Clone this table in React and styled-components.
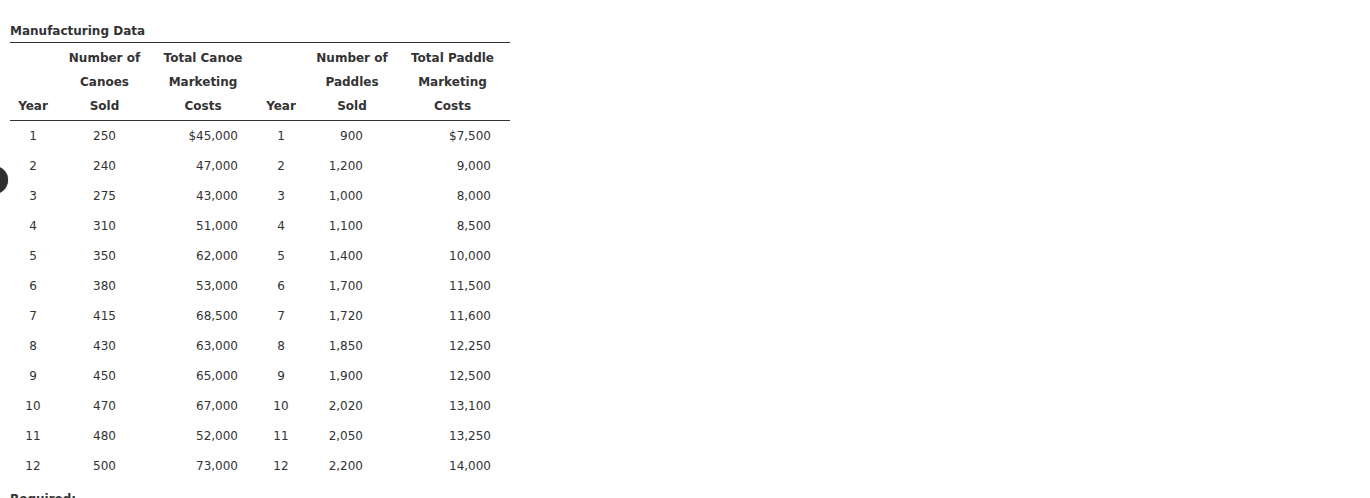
import React from "react";
import styled, { createGlobalStyle } from "styled-components";

const GlobalStyle = createGlobalStyle`
  html, body {
    margin: 0;
    padding: 0;
    background: #ffffff;
  }
  body {
    font-family: "DejaVu Sans", Verdana, sans-serif;
    color: #333333;
    overflow: hidden;
  }
`;

// ---------- Layout ----------
const Page = styled.div`
  position: relative;
  width: 1370px;
  height: 498px;
  overflow: hidden;
`;

const Section = styled.div`
  width: 500px;
  padding: 20px 0 0 10px;
`;

const Title = styled.div`
  font-size: 12px;
  font-weight: 700;
  line-height: 22px;
  height: 22px;
`;

// partially visible round button hanging off the left edge
const EdgeKnob = styled.div`
  position: absolute;
  left: -20px;
  top: 166px;
  width: 28px;
  height: 28px;
  border-radius: 50%;
  background: #2f2f2f;
  box-shadow: 0 0 1px #777;
`;

// ---------- Table ----------
const Table = styled.table`
  width: 500px;
  border-collapse: collapse;
  table-layout: fixed;
  font-size: 12px;
  color: #333333;
`;

const Head = styled.thead`
  border-top: 1px solid #333333;
  border-bottom: 1px solid #333333;
`;

const HeadCell = styled.th`
  font-weight: 700;
  text-align: center;
  vertical-align: bottom;
  line-height: 24px;
  padding: 3px 0 2px;
`;

const Cell = styled.td`
  height: 30px;
  box-sizing: border-box;
  padding: 1px ${({ pr }) => pr || 0}px 0 0;
  text-align: ${({ align }) => align || "center"};
  line-height: 29px;
  white-space: nowrap;
`;

const Required = styled.div`
  margin-top: 8px;
  font-size: 12px;
  font-weight: 700;
  line-height: 20px;
`;

const columns = [
  { width: 46, title: ["Year"], align: "center" },
  { width: 97, title: ["Number of", "Canoes", "Sold"], align: "right", pr: 37 },
  { width: 100, title: ["Total Canoe", "Marketing", "Costs"], align: "right", pr: 15 },
  { width: 56, title: ["Year"], align: "center" },
  { width: 86, title: ["Number of", "Paddles", "Sold"], align: "right", pr: 32 },
  { width: 115, title: ["Total Paddle", "Marketing", "Costs"], align: "right", pr: 19 },
];

const rows = [
  ["1", "250", "$45,000", "1", "900", "$7,500"],
  ["2", "240", "47,000", "2", "1,200", "9,000"],
  ["3", "275", "43,000", "3", "1,000", "8,000"],
  ["4", "310", "51,000", "4", "1,100", "8,500"],
  ["5", "350", "62,000", "5", "1,400", "10,000"],
  ["6", "380", "53,000", "6", "1,700", "11,500"],
  ["7", "415", "68,500", "7", "1,720", "11,600"],
  ["8", "430", "63,000", "8", "1,850", "12,250"],
  ["9", "450", "65,000", "9", "1,900", "12,500"],
  ["10", "470", "67,000", "10", "2,020", "13,100"],
  ["11", "480", "52,000", "11", "2,050", "13,250"],
  ["12", "500", "73,000", "12", "2,200", "14,000"],
];

const App = () => {
  return (
    <Page>
      <GlobalStyle />
      <EdgeKnob />
      <Section>
        <Title>Manufacturing Data</Title>
        <Table>
          <colgroup>
            {columns.map((c, i) => (
              <col key={i} style={{ width: c.width }} />
            ))}
          </colgroup>
          <Head>
            <tr>
              {columns.map((c, i) => (
                <HeadCell key={i}>
                  {c.title.map((line, j) => (
                    <div key={j}>{line}</div>
                  ))}
                </HeadCell>
              ))}
            </tr>
          </Head>
          <tbody>
            {rows.map((r, i) => (
              <tr key={i}>
                {r.map((v, j) => (
                  <Cell key={j} align={columns[j].align} pr={columns[j].pr}>
                    {v}
                  </Cell>
                ))}
              </tr>
            ))}
          </tbody>
        </Table>
        <Required>Required:</Required>
      </Section>
    </Page>
  );
};

export default App;
